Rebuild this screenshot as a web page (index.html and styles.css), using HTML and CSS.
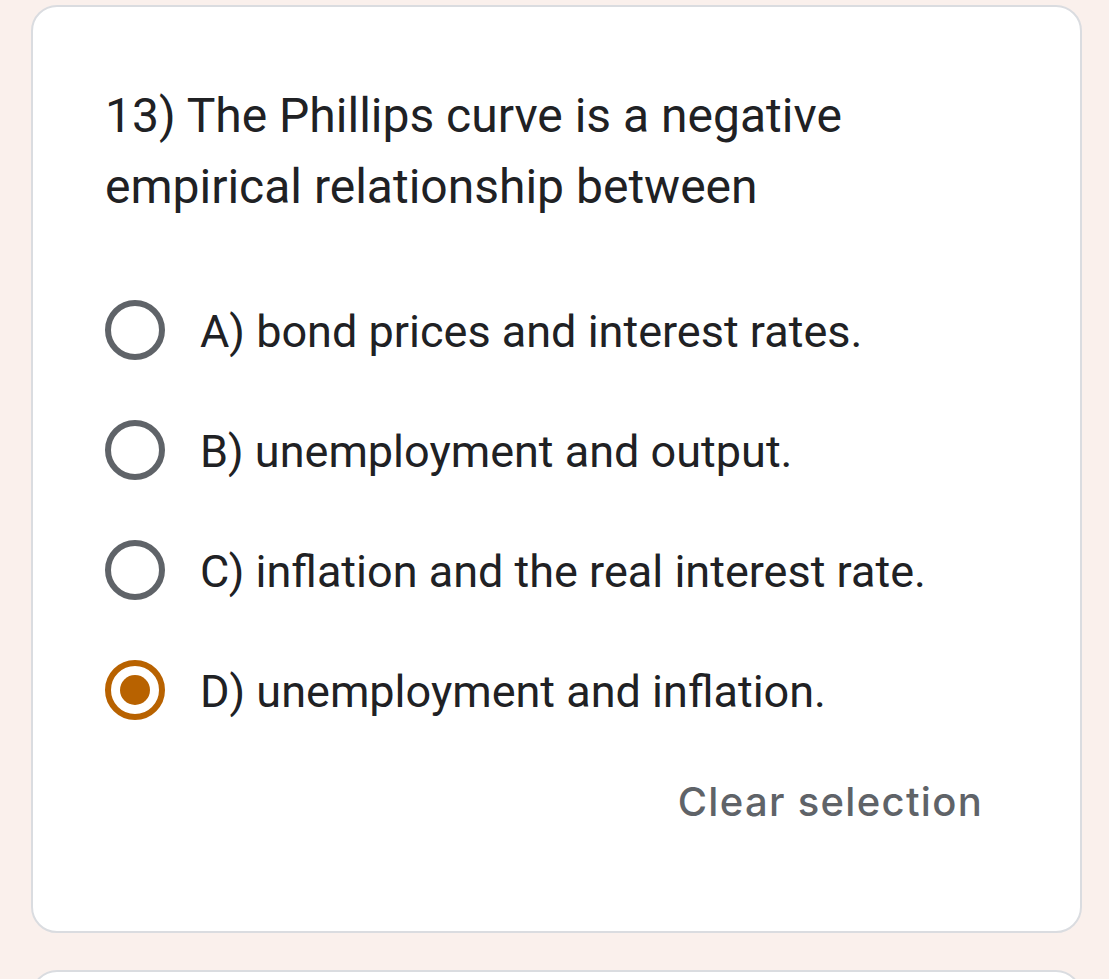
FILE: index.html
```html
<!DOCTYPE html>
<html>
<head>
<meta charset="utf-8">
<link rel="stylesheet" href="styles.css">
</head>
<body>
<div class="page">
  <div class="card">
    <div class="question">13) The Phillips curve is a negative empirical relationship between</div>
    <div class="options">
      <div class="option">
        <span class="radio"></span>
        <span class="label">A) bond prices and interest rates.</span>
      </div>
      <div class="option">
        <span class="radio"></span>
        <span class="label">B) unemployment and output.</span>
      </div>
      <div class="option">
        <span class="radio"></span>
        <span class="label">C) inflation and the real interest rate.</span>
      </div>
      <div class="option">
        <span class="radio checked"></span>
        <span class="label">D) unemployment and inflation.</span>
      </div>
    </div>
    <div class="clear-row"><span class="clear">Clear selection</span></div>
  </div>
  <div class="card next"></div>
</div>
</body>
</html>
```

FILE: styles.css
```css
html, body {
  margin: 0;
  padding: 0;
  background: #faf0ec;
}
body {
  width: 1109px;
  height: 979px;
  overflow: hidden;
  font-family: Roboto, "Liberation Sans", sans-serif;
}
.page {
  padding: 5px 27px 0 31px;
  display: flex;
  flex-direction: column;
  gap: 37px;
}
.card {
  background: #fff;
  border: 2px solid #dadce0;
  border-radius: 26px;
  height: 928px;
  box-sizing: border-box;
  padding: 73px 98px 0 72px;
  flex: none;
}
.question {
  font-size: 48px;
  line-height: 71px;
  color: #202124;
  width: 820px;
}
.options {
  margin-top: 48px;
  display: flex;
  flex-direction: column;
}
.option {
  height: 120px;
  display: flex;
  align-items: center;
  gap: 35px;
}
.radio {
  width: 60px;
  height: 60px;
  box-sizing: border-box;
  border: 6px solid #5f6368;
  border-radius: 50%;
  flex: none;
  display: flex;
  align-items: center;
  justify-content: center;
}
.radio.checked {
  border-color: #b86200;
}
.radio.checked::after {
  content: "";
  width: 30px;
  height: 30px;
  border-radius: 50%;
  background: #b86200;
}
.label {
  font-size: 45px;
  color: #202124;
  line-height: 60px;
  padding-top: 3px;
}
.clear-row {
  display: flex;
  justify-content: flex-end;
  margin-top: 22px;
}
.clear {
  font-family: Inter, sans-serif;
  font-size: 40px;
  letter-spacing: 1.3px;
  margin-right: -1px;
  color: #5f6368;
  font-weight: 500;
  line-height: 60px;
}
.card.next {
  height: 100px;
}
```
